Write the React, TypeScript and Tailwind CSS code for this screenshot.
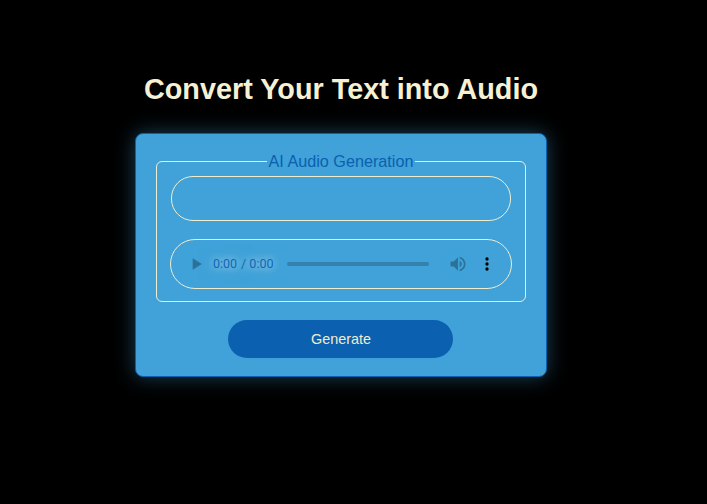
import React from 'react';

export default function App() {
  return (
    <div className="min-h-screen bg-black font-['Liberation_Sans',Arial,sans-serif]">
      <div className="flex w-[682px] flex-col items-center pt-[72px]">
        <h1 className="text-[28.8px] leading-[34px] font-bold text-[#f6f1d5]">Convert Your Text into Audio</h1>
        <div className="mt-[27px] flex h-[244px] w-[412px] flex-col items-center rounded-[8px] border border-[#0b60b0] bg-[#40a2d8] px-5 pt-[18px] shadow-[0_0_20px_#40a2d866]">
          <fieldset className="flex h-[150px] w-[370px] min-w-0 flex-col items-center rounded-[6px] border border-[#f0edcf] px-[14px]">
            <legend className="mx-auto px-[2px] text-[16.2px] leading-[19px] text-[#0b60b0]">AI Audio Generation</legend>
            <input
              type="text"
              className="mt-[5px] h-[45px] w-[340px] shrink-0 rounded-[22px] border border-[#f0edcf] bg-transparent px-4 outline-none"
            />
            <audio
              controls
              className="mt-[18px] h-[50px] w-[342px] shrink-0 rounded-[25px] border border-[#f0edcf] bg-transparent [&::-webkit-media-controls-current-time-display]:ml-[1px] [&::-webkit-media-controls-current-time-display]:text-[12.5px] [&::-webkit-media-controls-current-time-display]:text-[#0b60b0] [&::-webkit-media-controls-enclosure]:bg-transparent [&::-webkit-media-controls-mute-button]:mr-[-3px] [&::-webkit-media-controls-panel]:bg-transparent [&::-webkit-media-controls-panel]:[transform:translateX(2px)] [&::-webkit-media-controls-play-button]:ml-[-3px] [&::-webkit-media-controls-time-remaining-display]:text-[12.5px] [&::-webkit-media-controls-time-remaining-display]:text-[#0b60b0] [&::-webkit-media-controls-timeline]:mr-[-6px] [&::-webkit-media-controls-timeline]:ml-[-2px]"
            />
          </fieldset>
          <button className="mt-[18px] mr-[2px] h-[38px] w-[225px] rounded-[19px] bg-[#0b60b0] pt-px pl-[2px] text-[14.4px] text-[#f0edcf]">
            Generate
          </button>
        </div>
      </div>
    </div>
  );
}
